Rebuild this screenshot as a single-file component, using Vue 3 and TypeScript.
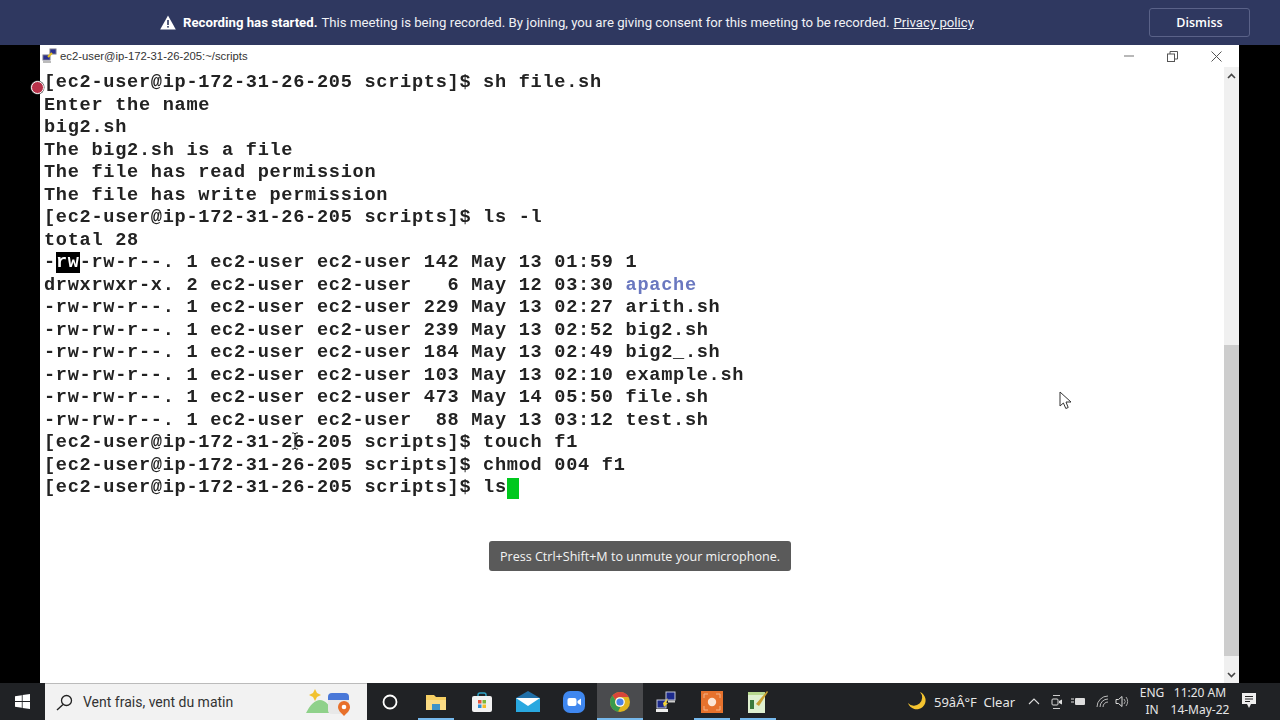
<script setup lang="ts">
interface Seg { t: string; c?: string }
const lines: Seg[][] = [
  [{ t: '[ec2-user@ip-172-31-26-205 scripts]$ sh file.sh' }],
  [{ t: 'Enter the name' }],
  [{ t: 'big2.sh' }],
  [{ t: 'The big2.sh is a file' }],
  [{ t: 'The file has read permission' }],
  [{ t: 'The file has write permission' }],
  [{ t: '[ec2-user@ip-172-31-26-205 scripts]$ ls -l' }],
  [{ t: 'total 28' }],
  [{ t: '-' }, { t: 'rw', c: 'sel' }, { t: '-rw-r--. 1 ec2-user ec2-user 142 May 13 01:59 1' }],
  [{ t: 'drwxrwxr-x. 2 ec2-user ec2-user   6 May 12 03:30 ' }, { t: 'apache', c: 'dir' }],
  [{ t: '-rw-rw-r--. 1 ec2-user ec2-user 229 May 13 02:27 arith.sh' }],
  [{ t: '-rw-rw-r--. 1 ec2-user ec2-user 239 May 13 02:52 big2.sh' }],
  [{ t: '-rw-rw-r--. 1 ec2-user ec2-user 184 May 13 02:49 big2_.sh' }],
  [{ t: '-rw-rw-r--. 1 ec2-user ec2-user 103 May 13 02:10 example.sh' }],
  [{ t: '-rw-rw-r--. 1 ec2-user ec2-user 473 May 14 05:50 file.sh' }],
  [{ t: '-rw-rw-r--. 1 ec2-user ec2-user  88 May 13 03:12 test.sh' }],
  [{ t: '[ec2-user@ip-172-31-26-205 scripts]$ touch f1' }],
  [{ t: '[ec2-user@ip-172-31-26-205 scripts]$ chmod 004 f1' }],
  [{ t: '[ec2-user@ip-172-31-26-205 scripts]$ ls' }, { t: ' ', c: 'cur' }],
]
</script>

<template>
  <div class="screen">
    <header class="banner">
      <div class="notice">
        <svg class="warn" width="16" height="15" viewBox="0 0 16 15"><path d="M8 .5 15.800 14.500H.2Z" fill="#fff"/><rect x="7.200" y="5" width="1.600" height="5" fill="#2f3860"/><rect x="7.200" y="11" width="1.600" height="1.600" fill="#2f3860"/></svg>
        <b>Recording has started.</b>
        <span>This meeting is being recorded. By joining, you are giving consent for this meeting to be recorded.</span>
        <u>Privacy policy</u>
      </div>
      <button class="dismiss">Dismiss</button>
    </header>

    <main class="desk">
      <section class="win">
        <div class="titlebar">
          <svg class="putty" width="16" height="16" viewBox="0 0 16 16"><rect x="8" y="1" width="6" height="5" fill="#2a2f8f" stroke="#778"/><rect x="1" y="7" width="7" height="5" fill="#2a2f8f" stroke="#778"/><rect x="1" y="13" width="8" height="2" fill="#bbb"/><path d="M6 9 10 5" stroke="#e8c020" stroke-width="2"/></svg>
          <span class="wtitle">ec2-user@ip-172-31-26-205:~/scripts</span>
          <div class="wbtns">
            <svg width="10" height="10" viewBox="0 0 10 10"><path d="M0 5h10" stroke="#888" stroke-width="1.200"/></svg>
            <svg width="11" height="11" viewBox="0 0 11 11"><rect x=".5" y="3" width="7" height="7.500" fill="#fff" stroke="#555"/><path d="M3 3V.5h7.500v7.500H7.500" fill="none" stroke="#555"/></svg>
            <svg width="11" height="11" viewBox="0 0 11 11"><path d="M.5.5l10 10M10.500.5l-10 10" stroke="#555"/></svg>
          </div>
        </div>
        <div class="body">
          <pre class="term"><div v-for="(l, i) in lines" :key="i" class="ln"><span v-for="(s, j) in l" :key="j" :class="s.c">{{ s.t }}</span></div></pre>
          <div class="scroll">
            <svg width="9" height="6" viewBox="0 0 9 6" class="arrow"><path d="M1 5 4.500 1.500 8 5" fill="none" stroke="#444" stroke-width="1.600"/></svg>
            <div class="thumb"></div>
            <svg width="9" height="6" viewBox="0 0 9 6" class="arrow"><path d="M1 1 4.500 4.500 8 1" fill="none" stroke="#444" stroke-width="1.600"/></svg>
          </div>
        </div>
        <i class="rec"></i>
        <svg class="ibeam" width="10" height="18" viewBox="0 0 10 18"><path d="M2 1h2l1 1 1-1h2M5 2v14M2 17h2l1-1 1 1h2" fill="none" stroke="#222"/></svg>
        <svg class="mouse" width="13" height="19" viewBox="0 0 13 19"><path d="M1 1v14l3.400-3 2.400 5.500 2.400-1L7 11h5Z" fill="#fff" stroke="#333"/></svg>
        <div class="toast">Press Ctrl+Shift+M to unmute your microphone.</div>
      </section>
    </main>

    <footer class="taskbar">
      <div class="start">
        <svg width="15" height="15" viewBox="0 0 15 15" fill="#fff"><path d="M0 2.200 6.800 1.200V7H0ZM7.600 1.100 15 0V7H7.600ZM0 7.900H6.800V13.800L0 12.800ZM7.600 7.900H15V15L7.600 13.900Z"/></svg>
      </div>
      <div class="search">
        <svg width="17" height="17" viewBox="0 0 17 17"><circle cx="10.500" cy="6.500" r="5" fill="none" stroke="#222" stroke-width="1.300"/><path d="M7 10.500 1 16" stroke="#222" stroke-width="1.400"/></svg>
        <span class="stext">Vent frais, vent du matin</span>
        <svg class="sart" width="48" height="30" viewBox="0 0 48 30">
          <path d="M7 6l2-4 2 4 4 2-4 2-2 4-2-4-4-2Z" fill="#f2c230"/>
          <path d="M0 26c4-8 9-13 14-13s10 5 12 13Z" fill="#8fd18a"/>
          <rect x="22" y="6" width="21" height="21" rx="4" fill="#e8e8e8"/>
          <path d="M22 13v-3a4 4 0 0 1 4-4h13a4 4 0 0 1 4 4v3Z" fill="#4a78d8"/>
          <path d="M38 29c-4-4-6-6-6-9a6 6 0 0 1 12 0c0 3-2 5-6 9Z" fill="#e8702a"/>
          <circle cx="38" cy="20" r="2.300" fill="#fff"/>
        </svg>
      </div>
      <div class="apps">
        <div class="app"><svg width="16" height="16" viewBox="0 0 16 16"><circle cx="8" cy="8" r="6.500" fill="none" stroke="#fff" stroke-width="1.800"/></svg></div>
        <div class="app on"><svg width="22" height="18" viewBox="0 0 22 18"><path d="M1 2h8l2 2h10v13H1Z" fill="#f6cf63"/><path d="M1 7h20v10H1Z" fill="#fbdc85"/><rect x="7" y="11" width="8" height="6" fill="#3f93c8"/></svg></div>
        <div class="app"><svg width="22" height="22" viewBox="0 0 22 22"><path d="M7 6V4a2 2 0 0 1 2-2h4a2 2 0 0 1 2 2v2" fill="none" stroke="#2fa5c8" stroke-width="1.400"/><rect x="1" y="5" width="20" height="16" rx="2" fill="#f2f2f2"/><rect x="7" y="9" width="3.500" height="3.500" fill="#e8533a"/><rect x="11.500" y="9" width="3.500" height="3.500" fill="#7cb83a"/><rect x="7" y="13.500" width="3.500" height="3.500" fill="#2f8fd8"/><rect x="11.500" y="13.500" width="3.500" height="3.500" fill="#f4bd2a"/></svg></div>
        <div class="app"><svg width="24" height="21" viewBox="0 0 24 21"><path d="M12 0 24 7v14H0V7Z" fill="#1f6fa8"/><path d="M0 7h24v14H0Z" fill="#29a8e0"/><path d="M0 7l12 8 12-8" fill="#fff"/></svg></div>
        <div class="app"><svg width="22" height="22" viewBox="0 0 22 22"><rect width="22" height="22" rx="7" fill="#3f87ef"/><rect x="4.500" y="7" width="9" height="8" rx="2" fill="#fff"/><path d="M14.500 10 18 7.500v7L14.500 12Z" fill="#fff"/></svg></div>
        <div class="app chrome on"><svg width="20" height="20" viewBox="0 0 20 20"><circle cx="10" cy="10" r="10" fill="#e0b520"/><path d="M10 0a10 10 0 0 1 8.700 5H10a5 5 0 0 0-4.600 3L2.500 3.500A10 10 0 0 1 10 0Z" fill="#d8453a"/><path d="M2.500 3.500 5.400 8a5 5 0 0 0 5 7l-2.400 4.800A10 10 0 0 1 2.500 3.500Z" fill="#3a9a4d"/><circle cx="10" cy="10" r="4.800" fill="#fff"/><circle cx="10" cy="10" r="3.600" fill="#4a82e8"/></svg></div>
        <div class="app"><svg width="22" height="22" viewBox="0 0 22 22"><rect x="11" y="1" width="9" height="8" fill="#1c2a8c" stroke="#c4c8d8"/><rect x="2" y="9" width="9" height="8" fill="#1c2a8c" stroke="#c4c8d8"/><rect x="1" y="18" width="12" height="3" fill="#eee"/><rect x="13" y="9.500" width="7" height="2" fill="#ccc"/><path d="M8 12 13 7l-2 5 2 0-4 4Z" fill="#f3d438"/></svg></div>
        <div class="app on"><svg width="22" height="22" viewBox="0 0 22 22"><rect width="22" height="22" fill="#e6722d"/><circle cx="11" cy="11" r="4.200" fill="#fbe6d6"/><path d="M3 7V3h4M15 3h4v4M19 15v4h-4M7 19H3v-4" fill="none" stroke="#f4b48a" stroke-width="1"/></svg></div>
        <div class="app on"><svg width="20" height="22" viewBox="0 0 20 22"><rect y="1" width="17" height="21" fill="#dff0d0"/><rect y="1" width="17" height="3" fill="#b7d88f"/><rect x="2" y="9" width="4" height="9" fill="#3a7a3a"/><path d="M8 13 19 0l1 1-9 14Z" fill="#c8a030"/></svg></div>
      </div>
      <div class="tray">
        <svg class="moon" width="18" height="18" viewBox="0 0 18 18"><path d="M12 0a8 8 0 0 1-12 11 9 9 0 1 0 12-11Z" fill="#f4c430"/></svg>
        <span class="weather">59âÂ°F&nbsp; Clear</span>
        <svg class="chev" width="12" height="7" viewBox="0 0 12 7"><path d="M1 6 6 1l5 5" fill="none" stroke="#ddd" stroke-width="1.100"/></svg>
        <svg class="t1" width="12" height="16" viewBox="0 0 12 16"><path d="M2 1.500h7M2 14.500h7" stroke="#ccc"/><rect x="1" y="5" width="6" height="6" rx="1" fill="none" stroke="#ddd"/><path d="M8 7l3-1.500v5L8 9Z" fill="#ddd"/></svg>
        <svg class="t2" width="15" height="9" viewBox="0 0 15 9"><rect x="4" y="1" width="10" height="7" rx="1" fill="#ddd"/><path d="M0 2h3M0 5h3" stroke="#ddd"/></svg>
        <svg class="t3" width="14" height="13" viewBox="0 0 14 13"><path d="M1 12a11 11 0 0 1 11-11M4 12a8 8 0 0 1 8-8M7 12a5 5 0 0 1 5-5" fill="none" stroke="#bbb"/></svg>
        <svg class="t4" width="15" height="13" viewBox="0 0 15 13"><path d="M1 4.500h2.500L7 1.500v10L3.500 8.500H1Z" fill="none" stroke="#ddd"/><path d="M9 4a3.500 3.500 0 0 1 0 5M11 2a7 7 0 0 1 0 9" fill="none" stroke="#aaa"/></svg>
        <div class="stack lang"><span>ENG</span><span>IN</span></div>
        <div class="stack clock"><span>11:20 AM</span><span>14-May-22</span></div>
        <svg class="note" width="14" height="16" viewBox="0 0 14 16"><path d="M0 0h14v11H9l-2 4-2-4H0Z" fill="#eee"/><path d="M3 3.500h8M3 6h8M3 8.500h5" stroke="#222"/></svg>
      </div>
    </footer>
  </div>
</template>

<style>
body { margin: 0; background: #000; }
</style>

<style scoped>
.screen { width: 1280px; height: 720px; display: flex; flex-direction: column; overflow: hidden; background: #000; font-family: "Open Sans", "Liberation Sans", sans-serif; }
.banner { height: 45px; flex: none; background: #2f3860; color: #fff; display: flex; align-items: center; position: relative; padding-left: 160px; box-sizing: border-box; }
.notice { display: flex; align-items: center; gap: 4px; font-size: 13.200px; font-family: Roboto, sans-serif; color: #f0f1f5; white-space: nowrap; }
.notice b { font-weight: 700; color: #fff; }
.warn { margin-right: 3px; }
.dismiss { position: absolute; left: 1149px; top: 8px; width: 101px; height: 29px; background: transparent; border: 1px solid #5a6288; border-radius: 3px; color: #fff; font: 600 12.500px "Open Sans", sans-serif; }
.desk { flex: 1; min-height: 0; padding: 0 41px 0 40px; display: flex; }
.win { flex: 1; background: #fff; display: flex; flex-direction: column; position: relative; min-width: 0; }
.titlebar { height: 22px; flex: none; display: flex; align-items: center; padding-left: 2px; gap: 2px; }
.wtitle { font-size: 11.300px; color: #333; font-family: "Liberation Sans", sans-serif; }
.wbtns { margin-left: auto; display: flex; gap: 33px; align-items: center; padding-right: 17px; }
.body { flex: 1; min-height: 0; display: flex; }
.term { flex: 1; margin: 0; padding: 5px 0 0 4px; font: 700 18.600px/22.500px "Liberation Mono", monospace; letter-spacing: .710px; color: #222; overflow: hidden; filter: blur(.35px); }
.ln { height: 22.500px; white-space: pre; }
.sel { background: #000; color: #fff; }
.dir { color: #6a78c0; }
.cur { background: #00c81e; display: inline-block; width: 12px; height: 21px; vertical-align: -1px; }
.scroll { width: 15px; background: #f0f0f0; display: flex; flex-direction: column; justify-content: space-between; align-items: center; padding: 6px 0 5px; box-sizing: border-box; position: relative; }
.arrow { flex: none; }
.thumb { position: absolute; left: 0; right: 0; top: 278px; height: 311px; background: #cdcdcd; }
.rec { position: absolute; left: -9px; top: 36px; width: 11px; height: 11px; border-radius: 50%; background: #b8324a; border: 1px solid #fff; box-shadow: 0 0 0 .5px #555; }
.ibeam { position: absolute; left: 250px; top: 387px; }
.mouse { position: absolute; left: 1019px; top: 346px; }
.toast { position: absolute; left: 449px; top: 496px; width: 302px; height: 30px; box-sizing: border-box; background: #5a5a5a; color: #f4f4f4; border-radius: 3px; font-size: 12.550px; display: flex; align-items: center; justify-content: center; white-space: nowrap; }
.taskbar { height: 37px; flex: none; background: #202225; display: flex; align-items: stretch; color: #e6e6e6; }
.start { width: 45px; display: flex; align-items: center; justify-content: center; }
.search { width: 322px; background: #f2f2f2; display: flex; align-items: center; padding-left: 11px; box-sizing: border-box; gap: 10px; position: relative; border-top: 1px solid #bbb; }
.stext { color: #333; font-size: 14px; font-family: Roboto, sans-serif; }
.sart { position: absolute; left: 261px; top: 3px; }
.apps { display: flex; }
.app { width: 46px; display: flex; align-items: center; justify-content: center; position: relative; }
.app.on::after { content: ""; position: absolute; left: 5px; right: 5px; bottom: 0; height: 2px; background: #76b9ed; }
.chrome { background: #4a4b4e; }
.chrome.on::after { left: 0; right: 0; }
.tray { flex: 1; position: relative; font-size: 12.500px; font-family: "Noto Sans", sans-serif; }
.tray > svg { position: absolute; }
.moon { left: 127px; top: 9px; }
.weather { position: absolute; left: 153px; top: 10px; white-space: nowrap; font-size: 13px; }
.chev { left: 247px; top: 15px; }
.t1 { left: 270px; top: 11px; }
.t2 { left: 290px; top: 14px; }
.t3 { left: 315px; top: 12px; }
.t4 { left: 334px; top: 12px; }
.stack { position: absolute; display: flex; flex-direction: column; align-items: center; line-height: 17px; top: 1px; font-size: 12px; white-space: nowrap; }
.lang { left: 356px; width: 30px; }
.clock { left: 369px; width: 100px; }
.note { left: 461px; top: 10px; }
</style>
